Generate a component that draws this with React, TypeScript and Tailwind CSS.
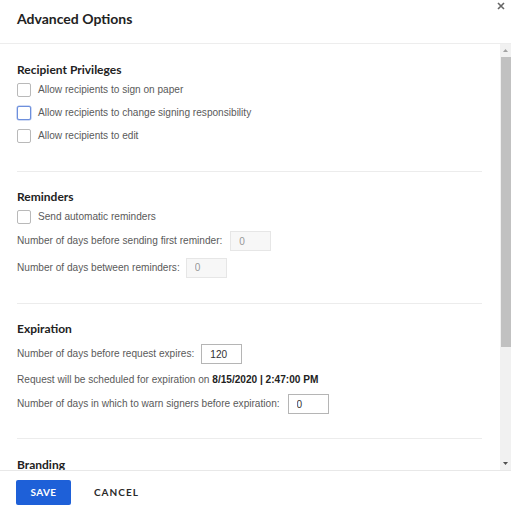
import { useState } from 'react'

const label = "font-['Liberation_Sans',Arial,sans-serif] text-[10.1px] text-[#5a5a5a]"
const heading = "h-4 font-['Lato','Open_Sans',sans-serif] text-[12px] font-bold leading-4 text-[#222]"

function Checkbox({ text, focused = false }: { text: string; focused?: boolean }) {
  const [checked, setChecked] = useState(false)
  return (
    <label className="flex h-[23px] cursor-pointer items-center gap-[7px] pt-px">
      <input
        type="checkbox"
        checked={checked}
        onChange={() => setChecked((v) => !v)}
        className={`h-[14px] w-[14px] appearance-none rounded-[2px] border bg-white ${
          focused ? 'border-[#6d8fdc] shadow-[0_0_0_0.5px_#9fb6ea]' : 'border-[#b9b9b9]'
        }`}
      />
      <span className={label}>{text}</span>
    </label>
  )
}

function NumberField({ value, disabled = false }: { value: string; disabled?: boolean }) {
  return (
    <input
      defaultValue={value}
      disabled={disabled}
      className={`h-5 w-[41px] border px-2 font-['Liberation_Sans',Arial,sans-serif] text-[10.1px] outline-none ${
        disabled ? 'border-[#e6e6e6] bg-[#f7f7f7] text-[#999]' : 'border-[#b5b5b5] bg-white text-[#333]'
      }`}
    />
  )
}

function Divider({ className }: { className: string }) {
  return <div className={`h-px bg-[#ececec] ${className}`} />
}

export default function App() {
  return (
    <div className="flex h-[512px] w-[511px] flex-col overflow-hidden bg-white">
      {/* header */}
      <div className="relative flex h-[44px] shrink-0 items-center border-b border-[#ededed] pl-[17px]">
        <h1 className="pb-[6px] font-['Lato','Open_Sans',sans-serif] text-[14px] font-bold text-[#222]">
          Advanced Options
        </h1>
        <button aria-label="Close" className="absolute right-[6px] top-[2px] text-[#666]">
          <svg width="8" height="8" viewBox="0 0 8 8" fill="none" stroke="currentColor" strokeWidth="1.6">
            <path d="M1 1l6 6M7 1L1 7" />
          </svg>
        </button>
      </div>

      {/* scrolling body */}
      <div className="flex min-h-0 flex-1">
        <div className="flex-1 overflow-hidden pl-[17px] pr-[18px] pt-[18px]">
          <section>
            <h2 className={heading}>Recipient Privileges</h2>
            <Checkbox text="Allow recipients to sign on paper" />
            <Checkbox text="Allow recipients to change signing responsibility" focused />
            <Checkbox text="Allow recipients to edit" />
          </section>
          <Divider className="mt-[24px]" />

          <section className="pt-[17px]">
            <h2 className={heading}>Reminders</h2>
            <Checkbox text="Send automatic reminders" />
            <div className="flex h-[26px] items-center gap-2">
              <span className={label}>Number of days before sending first reminder:</span>
              <NumberField value="0" disabled />
            </div>
            <div className="flex h-[27px] items-center gap-[6px]">
              <span className={label}>Number of days between reminders:</span>
              <NumberField value="0" disabled />
            </div>
          </section>
          <Divider className="mt-[22px]" />

          <section className="pt-[17px]">
            <h2 className={heading}>Expiration</h2>
            <div className="mt-[4px] flex h-[26px] items-center gap-[7px]">
              <span className={label}>Number of days before request expires:</span>
              <NumberField value="120" />
            </div>
            <div className="flex h-[26px] items-center">
              <span className={label}>
                Request will be scheduled for expiration on{' '}
                <span className="font-bold text-[#222]">8/15/2020 | 2:47:00 PM</span>
              </span>
            </div>
            <div className="flex h-[22px] items-center gap-2">
              <span className={label}>Number of days in which to warn signers before expiration:</span>
              <NumberField value="0" />
            </div>
          </section>
          <Divider className="mt-[23px]" />

          <section className="pt-[18px]">
            <h2 className={heading}>Branding</h2>
          </section>
        </div>

        {/* scrollbar */}
        <div className="flex w-[11px] shrink-0 flex-col bg-[#f1f1f1]">
          <div className="flex h-[13px] items-center justify-center">
            <svg width="5" height="3" viewBox="0 0 5 3">
              <path d="M2.5 0L5 3H0z" fill="#a3a3a3" />
            </svg>
          </div>
          <div className="ml-px h-[290px] bg-[#c1c1c1]" />
          <div className="flex-1" />
          <div className="flex h-[13px] items-center justify-center">
            <svg width="5" height="3" viewBox="0 0 5 3">
              <path d="M0 0h5L2.5 3z" fill="#505050" />
            </svg>
          </div>
        </div>
      </div>

      {/* footer */}
      <div className="flex h-[42px] shrink-0 items-center gap-[23px] border-t border-[#e8e8e8] pl-4 pt-[1px]">
        <button className="h-[25px] w-[55px] rounded-[2px] bg-[#1e60d8] font-['Lato','Open_Sans',sans-serif] text-[10px] font-bold tracking-[0.04em] text-white">
          SAVE
        </button>
        <button className="font-['Lato','Open_Sans',sans-serif] text-[10px] font-bold tracking-[0.1em] text-[#2a2a2a]">
          CANCEL
        </button>
      </div>
    </div>
  )
}
